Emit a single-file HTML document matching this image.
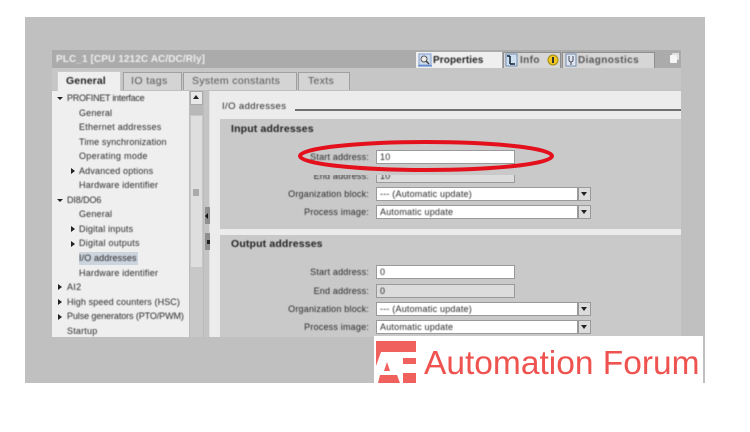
<!DOCTYPE html>
<html><head><meta charset="utf-8"><style>
html,body{margin:0;padding:0;background:#fff}
#p{position:relative;width:750px;height:432px;overflow:hidden;background:#fff;font-family:"Liberation Sans",sans-serif}
#p div{position:absolute;box-sizing:border-box}
.t{white-space:nowrap;color:#2a2a2a;font-size:9px;line-height:12px;letter-spacing:.2px;filter:blur(.45px)}
.n{height:12px}
.l{width:148px;text-align:right;left:221px}
.i{background:#fff;border:1px solid #9a9a9a;height:14px}
.b{position:absolute;width:13px;height:14px;background:#dcdcdc;border:1px solid #999}
.b:after{content:"";position:absolute;left:2px;top:4px;border:3.5px solid transparent;border-top:4px solid #222;border-bottom:0}
.ar{width:0;height:0;border:3px solid transparent;border-left:4px solid #222;border-right:0}
.ad{width:0;height:0;border:3.5px solid transparent;border-top:3.5px solid #222;border-bottom:0}
.tab{background:#d4d4d4;border:1px solid #a0a0a0;border-bottom:0;height:18px}
</style></head><body><div id="p">
<div style="left:25px;top:17px;width:680px;height:366px;background:#c0c0c0"></div>
<div style="left:52px;top:50px;width:629px;height:18px;background:#ababab"></div>
<div class="t" style="left:56px;top:54px;color:#eee;font-size:10px;font-weight:bold;letter-spacing:.1px">PLC_1 [CPU 1212C AC/DC/Rly]</div>
<div style="left:416px;top:52px;width:86px;height:17px;background:#efefef"></div>
<div style="left:503px;top:52px;width:58px;height:17px;background:#d6d6d6;border:1px solid #8f8f8f;border-bottom:0"></div>
<div style="left:562px;top:52px;width:93px;height:17px;background:#d6d6d6;border:1px solid #8f8f8f;border-bottom:0"></div>
<svg style="position:absolute;left:418px;top:53px" width="14" height="14"><rect x="1" y="1" width="12" height="11" fill="#cfdcf0" stroke="#7f9fd0"/><circle cx="6" cy="6" r="3" fill="#eee" stroke="#555"/><path d="M8 8l3 3" stroke="#444" stroke-width="1.5"/><path d="M0 13h14" stroke="#4a78c8"/></svg>
<div class="t" style="left:433px;top:55px;font-size:10px;font-weight:bold;letter-spacing:.1px;color:#222">Properties</div>
<svg style="position:absolute;left:505px;top:53px" width="14" height="14"><rect x="1" y="1" width="11" height="12" fill="#cfe0f0" stroke="#6f8fb0"/><path d="M5 3v8M5 11h5M2 3h3" stroke="#123" stroke-width="1.5" fill="none"/></svg>
<div class="t" style="left:520px;top:55px;font-size:10px;color:#555;font-weight:bold;letter-spacing:.4px">Info</div>
<svg style="position:absolute;left:547px;top:54px" width="12" height="12"><circle cx="6" cy="6" r="5" fill="#eec820" stroke="#a08a10"/><path d="M6 3v6" stroke="#333" stroke-width="2"/></svg>
<svg style="position:absolute;left:565px;top:53px" width="13" height="14"><rect x="1" y="1" width="10" height="12" fill="#dfe6f0" stroke="#6f8fb0"/><path d="M4 3v4a2 2 0 0 0 4 0V3M6 9v3" stroke="#445" fill="none"/></svg>
<div class="t" style="left:578px;top:55px;font-size:10px;color:#555;font-weight:bold;letter-spacing:.4px">Diagnostics</div>
<div style="left:672px;top:53px;width:7px;height:7px;background:#e0e0e0;border-radius:1px"></div>
<div style="left:670px;top:55px;width:7px;height:8px;background:#f6f6f6;border-radius:1px"></div>

<div style="left:52px;top:68px;width:629px;height:22px;background:#c6c6c6"></div>
<div class="tab" style="left:57px;top:71px;width:64px;height:20px;background:#efefef;border-color:#ccc"></div>
<div class="tab" style="left:123px;top:72px;width:59px"></div>
<div class="tab" style="left:183px;top:72px;width:114px"></div>
<div class="tab" style="left:298px;top:72px;width:52px"></div>
<div class="t" style="left:66px;top:75px;font-size:10.5px;font-weight:bold;letter-spacing:.1px;color:#222">General</div>
<div class="t" style="left:131px;top:75px;font-size:10.5px;color:#555;letter-spacing:.4px">IO tags</div>
<div class="t" style="left:192px;top:75px;font-size:10.5px;color:#555;letter-spacing:.33px">System constants</div>
<div class="t" style="left:308px;top:75px;font-size:10.5px;color:#555;letter-spacing:.3px">Texts</div>

<div style="left:52px;top:91px;width:137px;height:246px;background:#efefef"></div>
<div style="left:79px;top:252px;width:59px;height:13px;background:#ccd4de"></div>
<div class="ad" style="left:57px;top:97px"></div>
<div class="ad" style="left:57px;top:199px"></div>
<div class="ar" style="left:71px;top:168px"></div>
<div class="ar" style="left:71px;top:226px"></div>
<div class="ar" style="left:71px;top:241px"></div>
<div class="ar" style="left:58px;top:284px"></div>
<div class="ar" style="left:58px;top:299px"></div>
<div class="ar" style="left:58px;top:314px"></div>
<div class="t n" style="left:67px;top:92px;letter-spacing:-.28px">PROFINET interface</div>
<div class="t n" style="left:79px;top:107px;letter-spacing:.17px">General</div>
<div class="t n" style="left:79px;top:121px;letter-spacing:.25px">Ethernet addresses</div>
<div class="t n" style="left:79px;top:136px;letter-spacing:.15px">Time synchronization</div>
<div class="t n" style="left:79px;top:150px;letter-spacing:.3px">Operating mode</div>
<div class="t n" style="left:79px;top:165px;letter-spacing:.17px">Advanced options</div>
<div class="t n" style="left:79px;top:179px;letter-spacing:.19px">Hardware identifier</div>
<div class="t n" style="left:67px;top:194px;letter-spacing:-.1px">DI8/DO6</div>
<div class="t n" style="left:79px;top:208px;letter-spacing:.17px">General</div>
<div class="t n" style="left:79px;top:223px;letter-spacing:.2px">Digital inputs</div>
<div class="t n" style="left:79px;top:237px;letter-spacing:.25px">Digital outputs</div>
<div class="t n" style="left:79px;top:252px;letter-spacing:.12px">I/O addresses</div>
<div class="t n" style="left:79px;top:267px;letter-spacing:.19px">Hardware identifier</div>
<div class="t n" style="left:67px;top:281px;letter-spacing:.3px">AI2</div>
<div class="t n" style="left:67px;top:296px;letter-spacing:.12px">High speed counters (HSC)</div>
<div class="t n" style="left:67px;top:310px;letter-spacing:-.1px">Pulse generators (PTO/PWM)</div>
<div class="t n" style="left:67px;top:325px;letter-spacing:.2px">Startup</div>

<div style="left:189px;top:91px;width:15px;height:246px;background:#c8c8c8;border-left:1px solid #bbb;border-right:1px solid #bbb"></div>
<div style="left:190px;top:91px;width:13px;height:14px;background:#e8e8e8;border:1px solid #aaa"></div>
<div style="left:193px;top:95px;width:0;height:0;border:3.5px solid transparent;border-bottom:4px solid #222;border-top:0"></div>
<div style="left:190px;top:105px;width:13px;height:10px;background:#b8b8b8"></div>
<div style="left:190px;top:115px;width:13px;height:153px;background:#dedede;border:1px solid #c8c8c8"></div>
<div style="left:193px;top:189px;width:6px;height:7px;background:#aaa"></div>
<div style="left:204px;top:91px;width:6px;height:246px;background:#c4c4c4;border-right:1px solid #ddd"></div>
<div style="left:205px;top:207px;width:5px;height:17px;background:#8f8f8f"></div>
<div style="left:205px;top:233px;width:5px;height:17px;background:#8f8f8f"></div>
<div style="left:205px;top:213px;width:0;height:0;border:3px solid transparent;border-right:3px solid #111;border-left:0"></div>
<div style="left:207px;top:240px;width:3px;height:4px;background:#222"></div>

<div style="left:210px;top:91px;width:471px;height:246px;background:#ececec"></div>
<div class="t" style="left:222px;top:101px;font-size:9.5px;letter-spacing:.4px">I/O addresses</div>
<div style="left:295px;top:109px;width:386px;height:2px;background:#707070"></div>
<div style="left:220px;top:119px;width:461px;height:110px;background:#c9c9c9"></div>
<div style="left:220px;top:235px;width:461px;height:102px;background:#c9c9c9"></div>
<div class="t" style="left:231px;top:123px;font-size:10.5px;font-weight:bold;letter-spacing:.15px;color:#222">Input addresses</div>
<div class="t" style="left:231px;top:238px;font-size:10.5px;font-weight:bold;letter-spacing:.15px;color:#222">Output addresses</div>

<div class="t l" style="top:151px">Start address:</div>
<div class="t l" style="top:170px">End address:</div>
<div class="t l" style="top:188px">Organization block:</div>
<div class="t l" style="top:206px">Process image:</div>
<div class="i" style="left:376px;top:150px;width:139px"></div>
<div class="i" style="left:376px;top:169px;width:139px;background:#dcdcdc"></div>
<div class="i" style="left:376px;top:187px;width:202px"></div>
<div class="i" style="left:376px;top:205px;width:202px"></div>
<div class="b" style="left:578px;top:187px"></div>
<div class="b" style="left:578px;top:205px"></div>
<div class="t" style="left:380px;top:151px">10</div>
<div class="t" style="left:380px;top:170px">10</div>
<div class="t" style="left:380px;top:188px">--- (Automatic update)</div>
<div class="t" style="left:380px;top:206px">Automatic update</div>

<div class="t l" style="top:266px">Start address:</div>
<div class="t l" style="top:285px">End address:</div>
<div class="t l" style="top:303px">Organization block:</div>
<div class="t l" style="top:321px">Process image:</div>
<div class="i" style="left:376px;top:265px;width:139px"></div>
<div class="i" style="left:376px;top:284px;width:139px;background:#dcdcdc"></div>
<div class="i" style="left:376px;top:302px;width:202px"></div>
<div class="i" style="left:376px;top:320px;width:202px"></div>
<div class="b" style="left:578px;top:302px"></div>
<div class="b" style="left:578px;top:320px"></div>
<div class="t" style="left:380px;top:266px">0</div>
<div class="t" style="left:380px;top:285px">0</div>
<div class="t" style="left:380px;top:303px">--- (Automatic update)</div>
<div class="t" style="left:380px;top:321px">Automatic update</div>

<div style="left:300px;top:165px;width:225px;height:10px;background:#c9c9c9"></div>
<svg style="position:absolute;left:290px;top:135px" width="275" height="45"><ellipse cx="136" cy="21" rx="126" ry="14" fill="none" stroke="#e4101c" stroke-width="4"/></svg>

<div style="left:374px;top:336px;width:329px;height:47px;background:#fff"></div>
<svg style="position:absolute;left:374px;top:336px" width="45" height="47"><rect x="2" y="5" width="40" height="42" fill="#f0605c"/><path d="M7 16H42V22H29V28H42V37H29V47H26L23 39H6L4 47H2V30z" fill="#fff"/><path d="M13 26l3 9h-6z" fill="#f0605c"/></svg>
<div class="t" style="left:424px;top:344px;font-size:33.5px;line-height:40px;color:#ef5350;letter-spacing:0;filter:none">Automation Forum</div>
</div></body></html>
